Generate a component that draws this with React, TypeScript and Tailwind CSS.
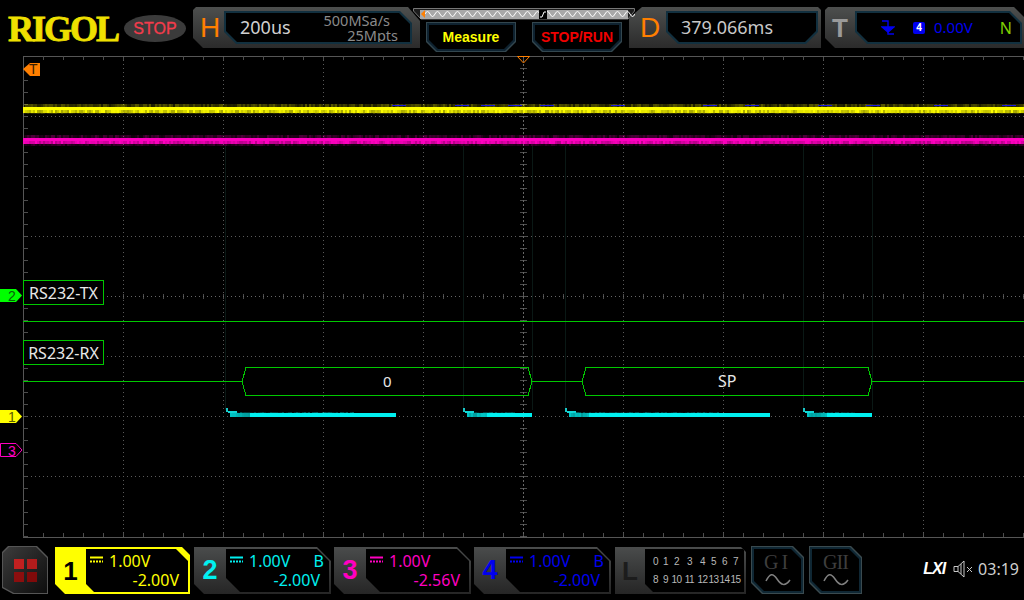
import { useMemo } from "react";

const channelClip =
  "[clip-path:polygon(0_0,calc(100%-14px)_0,100%_14px,100%_100%,10px_100%,0_calc(100%-10px))]";
const channelInnerClip =
  "[clip-path:polygon(0_0,calc(100%-12px)_0,100%_12px,100%_100%,14px_100%,0_calc(100%-14px))]";

function rng(seed: number) {
  let s = seed;
  return () => {
    s = (s * 16807) % 2147483647;
    return s / 2147483647;
  };
}

type Band = { y: number; h: number; min: number; max: number };

function NoiseBand({ color, seed, bands, x0 = 23, x1 = 1024 }: { color: string; seed: number; bands: Band[]; x0?: number; x1?: number }) {
  const rects = useMemo(() => {
    const r = rng(seed);
    const out: { x: number; y: number; h: number; o: number }[] = [];
    for (const b of bands) {
      for (let x = x0; x < x1; x += 2) {
        out.push({ x, y: b.y, h: b.h, o: b.min + (b.max - b.min) * r() });
      }
    }
    return out;
  }, []);
  return (
    <g fill={color}>
      {rects.map((q, i) => (
        <rect key={i} x={q.x} y={q.y} width={2} height={q.h} opacity={q.o} />
      ))}
    </g>
  );
}

function Graticule() {
  const vMajor = [123, 223, 323, 423, 623, 723, 823, 923];
  const hMajor = [116, 176, 236, 356, 416, 476];
  const xTicks: number[] = [];
  for (let x = 43; x < 1024; x += 20) xTicks.push(x);
  const yTicks: number[] = [];
  for (let y = 68; y < 537; y += 12) yTicks.push(y);
  return (
    <g stroke="#4c4c4c" strokeWidth={1} shapeRendering="crispEdges">
      <path d="M23 56.5H1024M23 537.5H1024M23.5 56V538" stroke="#565656" />
      {xTicks.map((x) => (
        <path key={x} d={`M${x}.5 56V60M${x}.5 533V537M${x}.5 294V299`} />
      ))}
      {yTicks.map((y) => (
        <path key={y} d={`M23 ${y}.5H28M520 ${y}.5H527`} />
      ))}
      {vMajor.map((x) => (
        <path key={x} d={`M${x}.5 56V537`} strokeDasharray="1 3" stroke="#5a5a5a" />
      ))}
      {hMajor.map((y) => (
        <path key={y} d={`M23 ${y}.5H1024`} strokeDasharray="1 3" stroke="#5a5a5a" />
      ))}
      <path d="M23 296.5H1024" strokeDasharray="1 3" stroke="#666" />
      <path d="M523.5 56V537" strokeDasharray="2 2" stroke="#666" />
    </g>
  );
}

function CyanPulse({ x0, x1, seed }: { x0: number; x1: number; seed: number }) {
  return (
    <g>
      <rect x={x0} y={408} width={2} height={4} fill="#19c8c8" />
      <rect x={x0 + 2} y={411} width={9} height={2} fill="#12d8d8" />
      <NoiseBand color="#00c8c8" seed={seed} x0={x0 + 6} x1={x0 + (x1 - x0) * 0.75} bands={[{ y: 412, h: 2, min: 0.05, max: 0.45 }]} />
      <rect x={x0 + 4} y={413} width={x1 - x0 - 4} height={4} fill="#00f0f0" />
      <NoiseBand color="#009a9a" seed={seed + 5} x0={x0 + 4} x1={x0 + 24} bands={[{ y: 413, h: 4, min: 0.5, max: 1 }]} />
    </g>
  );
}

function Scope() {
  const specks = [392, 455, 481, 508, 540, 611, 703, 745, 818, 866, 934, 1002];
  return (
    <div className="relative h-[490px] w-full">
      <svg className="absolute inset-0 h-full w-full" viewBox="0 56 1024 490">
        <Graticule />
        <g stroke="#0a1815" shapeRendering="crispEdges">
          {[225, 463, 532, 565, 803, 872].map((x) => (
            <path key={x} d={`M${x}.5 146V410`} />
          ))}
        </g>
        <NoiseBand
          color="#ffff00"
          seed={4711}
          bands={[
            { y: 104, h: 3, min: 0.1, max: 0.35 },
            { y: 107, h: 3, min: 1, max: 1 },
            { y: 110, h: 3, min: 0.65, max: 1 },
            { y: 113, h: 1, min: 0.05, max: 0.25 },
          ]}
        />
        <g fill="#1c1ce0">
          {specks.map((x) => (
            <rect key={x} x={x} y={105} width={14} height={1} />
          ))}
        </g>
        <NoiseBand
          color="#ff00c0"
          seed={991}
          bands={[
            { y: 135, h: 3, min: 0.06, max: 0.3 },
            { y: 138, h: 3, min: 1, max: 1 },
            { y: 141, h: 3, min: 0.7, max: 1 },
            { y: 144, h: 2, min: 0.05, max: 0.25 },
          ]}
        />
        <g fill="none" stroke="#00c800" strokeWidth={1} shapeRendering="crispEdges">
          <path d="M23 321.5H1024" />
          <path d="M23 381.5H242M532 381.5H582M872 381.5H1024" />
          <path d="M246 367.5H528L532 381.5L528 395.5H246L242 381.5Z" />
          <path d="M586 367.5H868L872 381.5L868 395.5H586L582 381.5Z" />
        </g>
        <CyanPulse x0={226} x1={396} seed={11} />
        <CyanPulse x0={463} x1={532} seed={23} />
        <CyanPulse x0={565} x1={770} seed={37} />
        <CyanPulse x0={803} x1={872} seed={53} />
        <path d="M517.5 56.5H529.5L523.5 63Z" fill="none" stroke="#ff7f00" />
        <path d="M23 69L30 63H40V76H30Z" fill="#ff7f00" />
        <path d="M0 289H16L22 295.5L16 302H0Z" fill="#00ff00" />
        <path d="M0 410H16L22 416.5L16 423H0Z" fill="#ffff00" />
        <path d="M0.5 443.5H16L22 450L16 456.5H0.5Z" fill="none" stroke="#ff00c0" />
      </svg>
      <span className="absolute left-[29px] top-[6px] text-[14px] leading-[14px] text-[#3a2000]">T</span>
      <span className="absolute left-[8px] top-[233px] text-[14px] leading-[14px] text-[#0a5a0a]">2</span>
      <span className="absolute left-[8px] top-[354px] text-[14px] leading-[14px] text-[#5a5a00]">1</span>
      <span className="absolute left-[8px] top-[388px] text-[14px] leading-[14px] text-[#ff00c0]">3</span>
      <div className="absolute left-[23px] top-[224px] flex h-[25px] w-[81px] items-center justify-center border border-[#00c800] bg-black font-['Noto_Sans',sans-serif] text-[16px] text-[#e8e8e8]">
        RS232-TX
      </div>
      <div className="absolute left-[23px] top-[284px] flex h-[25px] w-[81px] items-center justify-center border border-[#00c800] bg-black font-['Noto_Sans',sans-serif] text-[16px] text-[#e8e8e8]">
        RS232-RX
      </div>
      <span className="absolute left-[383px] top-[317px] font-['Noto_Sans',sans-serif] text-[15px] leading-4 text-[#e8e8e8]">0</span>
      <span className="absolute left-[718px] top-[317px] font-['Noto_Sans',sans-serif] text-[16px] leading-4 text-[#e8e8e8]">SP</span>
    </div>
  );
}

function TimelineStrip() {
  let wave = "M425 14";
  for (let x = 425; x < 628; x += 10) {
    wave += ` q2.5 -5 5 0 t5 0`;
  }
  return (
    <svg className="h-[12px] w-[222px]" viewBox="413 8 222 12">
      <path d="M413.5 8.5H634.5V11L628 19H421L413.5 11Z" fill="#1c1c1c" stroke="#777" />
      <rect x={420} y={10} width={208} height={9} fill="#a8a8a8" />
      <path d={wave} fill="none" stroke="#fff" strokeWidth={1} />
      <rect x={539} y={10} width={8} height={9} fill="#000" />
      <path d="M540 17h2l2 -5h2" fill="none" stroke="#fff" />
      <path d="M421 14L425 10V18Z" fill="#ff7f00" />
    </svg>
  );
}

function SmallButton({ label, color, width }: { label: string; color: string; width: string }) {
  return (
    <div className={`h-[30px] ${width} bg-[#33464e] p-[1px] [clip-path:polygon(0_0,100%_0,100%_calc(100%-10px),calc(100%-10px)_100%,10px_100%,0_calc(100%-10px))]`}>
      <div className="h-full w-full bg-[#0e2230] p-[2px] [clip-path:polygon(0_0,100%_0,100%_calc(100%-10px),calc(100%-10px)_100%,10px_100%,0_calc(100%-10px))]">
        <div className={`flex h-full w-full items-center justify-center bg-black text-[14px] font-bold ${color} [clip-path:polygon(0_0,100%_0,100%_calc(100%-9px),calc(100%-9px)_100%,9px_100%,0_calc(100%-9px))]`}>
          {label}
        </div>
      </div>
    </div>
  );
}

function Header() {
  return (
    <div className="flex h-[56px] w-full items-start">
      <div className="ml-[8px] mt-[9px] w-[110px] font-['Liberation_Serif',serif] text-[36px] font-bold leading-[40px] tracking-[-2px] text-[#efe000] [-webkit-text-stroke:0.8px_#efe000]">
        RIGOL
      </div>
      <div className="ml-[6px] mt-[15px] flex h-[27px] w-[62px] items-center justify-center rounded-[50%] bg-[#3b3b3b] text-[16px] text-[#f23c4c] [-webkit-text-stroke:0.3px_#f23c4c]">
        STOP
      </div>
      <div className="ml-[7px] mt-[7px] flex h-[41px] w-[227px] items-center bg-linear-to-b from-[#4d4f4e] to-[#2b2b2b] [clip-path:polygon(3px_0,calc(100%-12px)_0,100%_14px,100%_100%,10px_100%,0_calc(100%-10px),0_3px)]">
        <span className="w-[31px] pl-[3px] text-center text-[28px] leading-none text-[#ff7f00]">H</span>
        <div className="h-[33px] w-[188px] bg-[#12303f] p-[2px] [clip-path:polygon(0_0,calc(100%-12px)_0,100%_12px,100%_100%,12px_100%,0_calc(100%-12px))]">
          <div className="flex h-full w-full items-center justify-between bg-black pl-[14px] pr-[12px] font-['Noto_Sans',sans-serif] [clip-path:polygon(0_0,calc(100%-11px)_0,100%_11px,100%_100%,11px_100%,0_calc(100%-11px))]">
            <span className="text-[18px] text-[#d0d0d0]">200us</span>
            <div className="flex flex-col items-end text-[14.5px] leading-[15px] text-[#8a8a8a]">
              <span className="mr-[8px]">500MSa/s</span>
              <span>25Mpts</span>
            </div>
          </div>
        </div>
      </div>
      <div className="relative z-10 -ml-[7px] mt-[8px] flex w-[222px] flex-col">
        <TimelineStrip />
        <div className="mt-[2px] flex gap-[16px] pl-[13px]">
          <SmallButton label="Measure" color="text-[#ffff00]" width="w-[90px]" />
          <SmallButton label="STOP/RUN" color="text-[#f00000]" width="w-[90px]" />
        </div>
      </div>
      <div className="-ml-[6px] mt-[7px] flex h-[41px] w-[192px] items-center bg-linear-to-b from-[#4d4f4e] to-[#2b2b2b] [clip-path:polygon(13px_0,calc(100%-3px)_0,100%_3px,100%_100%,0_100%,0_11px)]">
        <span className="w-[37px] pl-[5px] text-center text-[28px] leading-none text-[#ff7f00]">D</span>
        <div className="h-[33px] w-[152px] bg-[#12303f] p-[2px] [clip-path:polygon(0_0,100%_0,100%_calc(100%-12px),calc(100%-12px)_100%,12px_100%,0_calc(100%-12px))]">
          <div className="flex h-full w-full items-center bg-black pl-[13px] font-['Noto_Sans',sans-serif] text-[18px] text-[#c8c8c8] [clip-path:polygon(0_0,100%_0,100%_calc(100%-11px),calc(100%-11px)_100%,11px_100%,0_calc(100%-11px))]">
            379.066ms
          </div>
        </div>
      </div>
      <div className="ml-[4px] mt-[7px] flex h-[41px] w-[199px] items-center bg-linear-to-b from-[#4d4f4e] to-[#2b2b2b] [clip-path:polygon(3px_0,calc(100%-10px)_0,100%_10px,100%_100%,10px_100%,0_calc(100%-10px),0_3px)]">
        <span className="w-[30px] text-center text-[26px] font-bold leading-none text-[#9a9a9a]">T</span>
        <div className="h-[33px] w-[167px] bg-[#12303f] p-[2px] [clip-path:polygon(0_0,calc(100%-12px)_0,100%_12px,100%_100%,12px_100%,0_calc(100%-12px))]">
          <div className="flex h-full w-full items-center bg-black pl-[24px] font-['Noto_Sans',sans-serif] [clip-path:polygon(0_0,calc(100%-11px)_0,100%_11px,100%_100%,11px_100%,0_calc(100%-11px))]">
            <svg className="h-[15px] w-[14px]" viewBox="0 0 14 15" fill="none" stroke="#0000f0" strokeWidth={1.4}>
              <path d="M1 1H7V7M7 11V14H13" />
              <path d="M1 7H13L7 12Z" fill="#0000f0" />
            </svg>
            <span className="ml-[18px] flex h-[12px] w-[12px] items-center justify-center rounded-[2px] bg-[#0000f0] text-[10px] font-bold text-white">4</span>
            <span className="ml-[9px] text-[15px] text-[#0000f0]">0.00V</span>
            <span className="ml-[27px] text-[16px] text-[#80d000]">N</span>
          </div>
        </div>
      </div>
    </div>
  );
}

function CouplingIcon({ color }: { color: string }) {
  return (
    <svg className="mt-[4px] h-[8px] w-[13px] shrink-0" viewBox="0 0 13 8" fill="none" stroke={color}>
      <path d="M0 1.5H13" strokeWidth={2} />
      <path d="M0 5.5H13" strokeWidth={2} strokeDasharray="2 1" />
    </svg>
  );
}

function ChannelBody({ volts, offset, color, bw, hex }: { volts: string; offset: string; color: string; bw?: string; hex: string }) {
  return (
    <div className={`flex h-full flex-col justify-center pl-[4px] pr-[9px] font-['Noto_Sans',sans-serif] text-[16px] leading-[19px] ${color}`}>
      <div className="flex items-start">
        <CouplingIcon color={hex} />
        <span className="ml-[6px]">{volts}</span>
        {bw && <span className="-mr-[4px] ml-auto">{bw}</span>}
      </div>
      <div className="text-right">{offset}</div>
    </div>
  );
}

function ChannelTab({ n, volts, offset, color, hex, bw, margin }: { n: string; volts: string; offset: string; color: string; hex: string; bw?: string; margin: string }) {
  return (
    <div className={`${margin} mt-[1px] flex h-[47px] w-[137px] items-center bg-linear-to-b from-[#4a4c4c] to-[#262626] pb-[1px] pt-[1px] ${channelClip}`}>
      <span className={`w-[32px] text-center text-[27px] font-bold leading-none ${color}`}>{n}</span>
      <div className={`h-[43px] w-[103px] bg-black ${channelInnerClip}`}>
        <ChannelBody volts={volts} offset={offset} color={color} hex={hex} bw={bw} />
      </div>
    </div>
  );
}

function LogicTab() {
  const top = ["0", "1", "2", "3", "4", "5", "6", "7"];
  const bottom = ["8", "9", "10", "11", "12", "13", "14", "15"];
  return (
    <div className="ml-[4px] mt-[1px] flex h-[47px] w-[131px] items-center bg-linear-to-b from-[#4a4c4c] to-[#262626] [clip-path:polygon(0_0,calc(100%-5px)_0,100%_5px,100%_100%,0_100%)]">
      <span className="w-[30px] text-center text-[26px] font-bold leading-none text-[#1c1c1c]">L</span>
      <div className="h-[43px] w-[99px] bg-black pl-[6px] [clip-path:polygon(0_0,100%_0,100%_100%,8px_100%,0_calc(100%-8px))]">
        <div className="grid h-full grid-cols-[9px_11px_11px_15px_11px_11px_11px_11px] content-center gap-y-[6px] text-[10px] leading-[12px] text-[#b8b8b8]">
          {top.concat(bottom).map((d) => (
            <span key={d} className="text-center tracking-[-0.5px]">{d}</span>
          ))}
        </div>
      </div>
    </div>
  );
}

function GenTab({ label, spacing }: { label: string; spacing: string }) {
  return (
    <div className="ml-[5px] h-[48px] w-[53px] bg-[#3a4a4f] p-[1px] [clip-path:polygon(0_0,calc(100%-11px)_0,100%_11px,100%_100%,11px_100%,0_calc(100%-11px))]">
      <div className="h-full w-full bg-[#0f2734] p-[2px] [clip-path:polygon(0_0,calc(100%-11px)_0,100%_11px,100%_100%,11px_100%,0_calc(100%-11px))]">
        <div className="flex h-full w-full flex-col items-center bg-black pt-[2px] [clip-path:polygon(0_0,calc(100%-10px)_0,100%_10px,100%_100%,10px_100%,0_calc(100%-10px))]">
          <span className={`font-['Liberation_Serif',serif] text-[20px] leading-[22px] ${spacing} text-[#3e3e3e]`}>{label}</span>
          <svg className="h-[14px] w-[26px]" viewBox="0 0 26 14" fill="none" stroke="#808080" strokeWidth={1.5}>
            <path d="M1 8C5 0 8 0 12 6S20 14 25 7" />
          </svg>
        </div>
      </div>
    </div>
  );
}

function Footer() {
  return (
    <div className="flex h-[54px] w-full items-start">
      <div className="ml-[2px] h-[48px] w-[46px] bg-[#555] p-[1px] [clip-path:polygon(6px_0,calc(100%-11px)_0,100%_11px,100%_100%,11px_100%,0_calc(100%-6px),0_6px)]">
        <div className="grid h-full w-full grid-cols-[10px_10px] content-center justify-center gap-[3px] bg-linear-to-br from-[#3c3c3c] to-[#0e0e0e] [clip-path:polygon(6px_0,calc(100%-11px)_0,100%_11px,100%_100%,11px_100%,0_calc(100%-6px),0_6px)]">
          <div className="h-[10px] bg-[#c22020]" />
          <div className="h-[10px] bg-[#b21c1c]" />
          <div className="h-[10px] bg-[#8c0e0e]" />
          <div className="h-[10px] bg-[#800a0a]" />
        </div>
      </div>
      <div className="ml-[7px] mt-[1px] h-[47px] w-[135px] bg-[#ffff00] [clip-path:polygon(0_0,calc(100%-8px)_0,100%_8px,100%_100%,10px_100%,0_calc(100%-10px))]">
        <div className="flex h-full w-full items-center">
          <span className="w-[31px] text-center text-[26px] font-bold leading-none text-black">1</span>
          <div className="mb-0 h-[43px] w-[102px] bg-black [clip-path:polygon(0_0,calc(100%-12px)_0,100%_12px,100%_100%,8px_100%,0_calc(100%-8px))]">
            <ChannelBody volts="1.00V" offset="-2.00V" color="text-[#ffff00]" hex="#ffff00" />
          </div>
        </div>
      </div>
      <ChannelTab margin="ml-[4px]" n="2" volts="1.00V" offset="-2.00V" color="text-[#00f0f0]" hex="#00f0f0" bw="B" />
      <ChannelTab margin="ml-[3px]" n="3" volts="1.00V" offset="-2.56V" color="text-[#ff00c0]" hex="#ff00c0" />
      <ChannelTab margin="ml-[3px]" n="4" volts="1.00V" offset="-2.00V" color="text-[#0000f0]" hex="#0000f0" bw="B" />
      <LogicTab />
      <GenTab label="GI" spacing="tracking-[3px]" />
      <GenTab label="GII" spacing="tracking-[-1px]" />
      <div className="ml-auto mr-[5px] mt-[13px] flex items-center text-[#cfcfcf]">
        <span className="text-[16px] font-bold italic leading-none tracking-[-1px] text-white">LXI</span>
        <svg className="ml-[8px] h-[20px] w-[20px]" viewBox="0 0 20 18" fill="none" stroke="#c8c8c8" strokeWidth={1}>
          <path d="M1 6.5H5L11 1V17L5 11.5H1Z" />
          <path d="M5 6.5V11.5M8 4V14" />
          <path d="M14 7L19 12M19 7L14 12" />
        </svg>
        <span className="ml-[5px] font-['Noto_Sans',sans-serif] text-[16px] leading-none">03:19</span>
      </div>
    </div>
  );
}

export default function App() {
  return (
    <div className="flex h-[600px] w-[1024px] flex-col overflow-hidden bg-black font-['Liberation_Sans',Arial,sans-serif]">
      <Header />
      <Scope />
      <Footer />
    </div>
  );
}
